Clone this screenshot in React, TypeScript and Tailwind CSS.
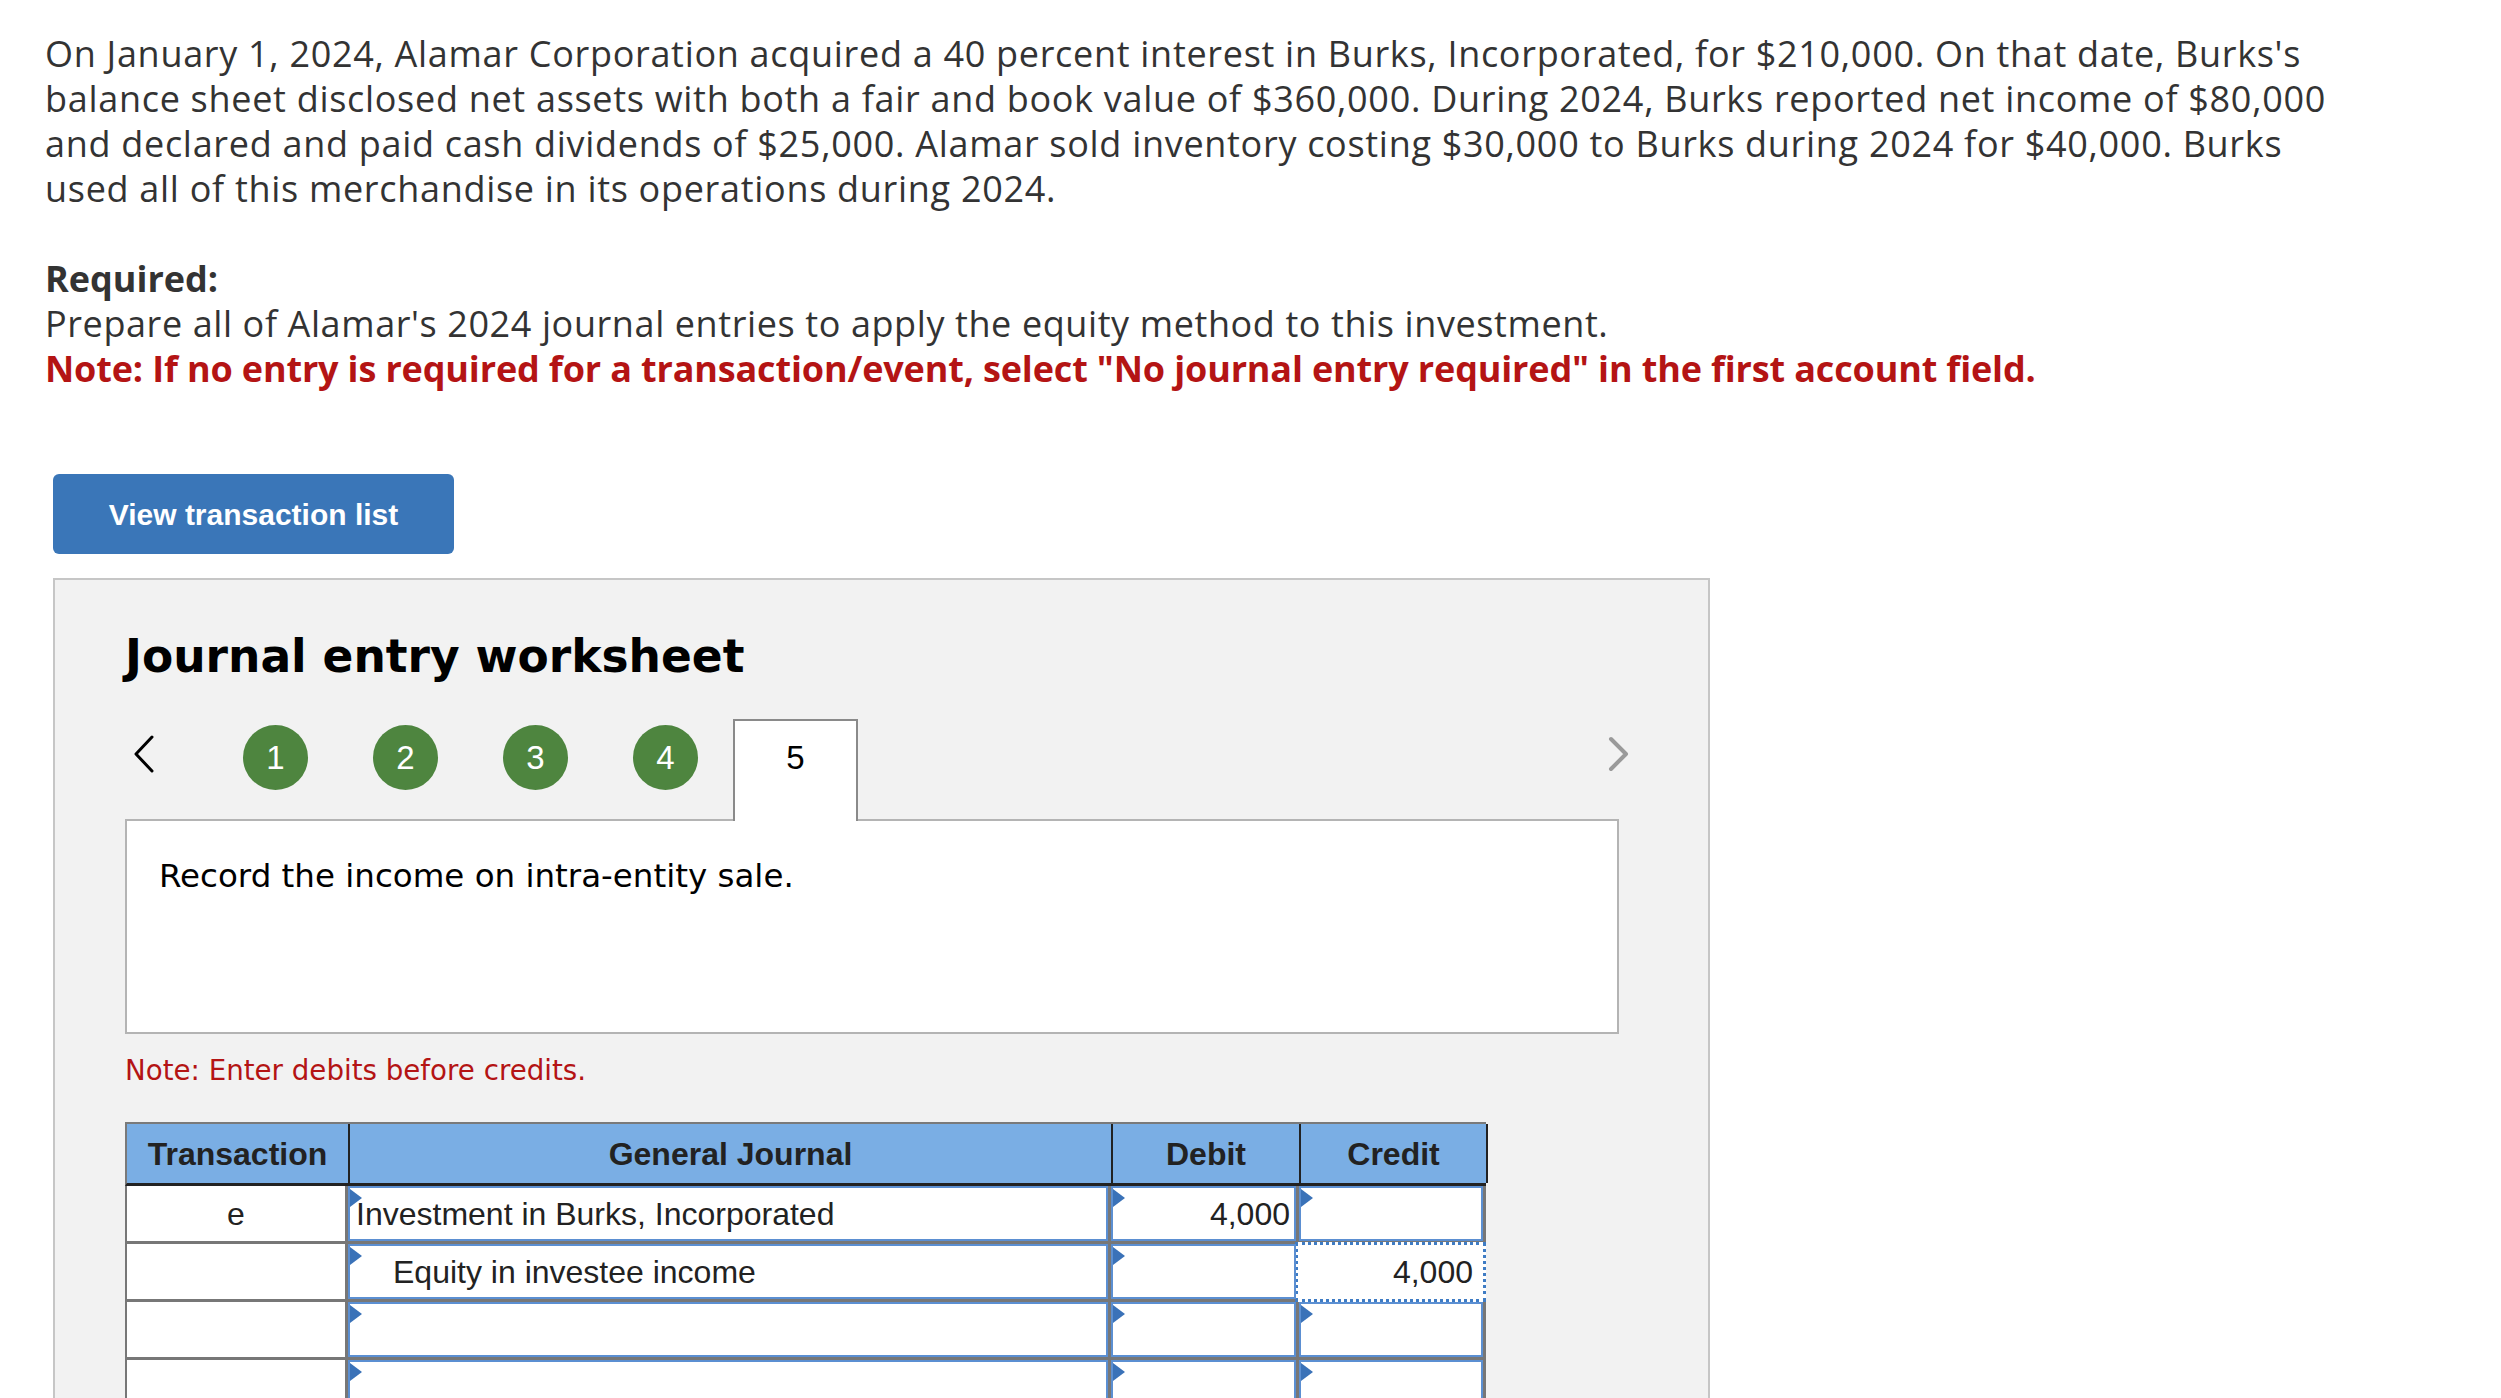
import React from "react";

const rows = [
  { tx: "e", account: "Investment in Burks, Incorporated", indent: false, debit: "4,000", credit: "", focus: false },
  { tx: "", account: "Equity in investee income", indent: true, debit: "", credit: "4,000", focus: true },
  { tx: "", account: "", indent: false, debit: "", credit: "", focus: false },
  { tx: "", account: "", indent: false, debit: "", credit: "", focus: false },
];

function Flag() {
  return (
    <span className="absolute left-0 top-[1px] w-0 h-0 border-y-[9px] border-y-transparent border-l-[12px] border-l-[#3a72b8]" />
  );
}

function InputCell({ value, align, indent }: { value: string; align: "left" | "right"; indent?: boolean }) {
  return (
    <div className="h-[58px] border-r-[3px] border-b-[3px] border-[#777]">
      <div
        className={`relative h-full border-2 border-[#5b8fd2] bg-white flex items-center ${
          align === "right" ? "justify-end pr-[4px]" : indent ? "pl-[43px]" : "pl-[6px]"
        }`}
      >
        <Flag />
        <span>{value}</span>
      </div>
    </div>
  );
}

export default function App() {
  return (
    <div className="min-h-screen bg-white pl-[45px] pt-[31px] pb-[40px] text-[#333]">
      {/* Problem text */}
      <p className="font-['Open_Sans',sans-serif] text-[36px] leading-[45px] tracking-[0.7px]">
        On January 1, 2024, Alamar Corporation acquired a 40 percent interest in Burks, Incorporated, for $210,000. On that date, Burks's
        <br />
        balance sheet disclosed net assets with both a fair and book value of $360,000. During 2024, Burks reported net income of $80,000
        <br />
        and declared and paid cash dividends of $25,000. Alamar sold inventory costing $30,000 to Burks during 2024 for $40,000. Burks
        <br />
        used all of this merchandise in its operations during 2024.
      </p>

      <div className="mt-[45px] font-['Open_Sans',sans-serif] text-[36px] leading-[45px] tracking-[0.6px]">
        <p className="font-bold tracking-normal">Required:</p>
        <p>Prepare all of Alamar's 2024 journal entries to apply the equity method to this investment.</p>
        <p className="font-bold tracking-[-0.15px] text-[#b41414]">
          Note: If no entry is required for a transaction/event, select "No journal entry required" in the first account field.
        </p>
      </div>

      <button className="mt-[83px] ml-[8px] w-[401px] h-[80px] rounded-[6px] bg-[#3a76b8] text-white font-bold text-[30px] font-['Liberation_Sans',Arial,sans-serif]">
        View transaction list
      </button>

      {/* Worksheet panel */}
      <div className="mt-[24px] ml-[8px] w-[1657px] border-2 border-[#c6c6c6] bg-[#f2f2f2] pl-[70px] pt-[53px] pb-[120px]">
        <h2 className="font-['DejaVu_Sans',Verdana,sans-serif] font-bold text-[45.5px] leading-[48px] text-black">
          Journal entry worksheet
        </h2>

        <div className="mt-[38px] flex items-start h-[100px] w-[1510px]">
          <svg className="ml-[7px] mt-[16px]" width="24" height="38" viewBox="0 0 24 38" fill="none">
            <path d="M20 2 L4 19 L20 36" stroke="#000" strokeWidth="3" strokeLinecap="round" strokeLinejoin="round" />
          </svg>
          {[1, 2, 3, 4].map((n, i) => (
            <div
              key={n}
              className={`${i === 0 ? "ml-[87px]" : "ml-[65px]"} mt-[6px] w-[65px] h-[65px] rounded-full bg-[#4e853f] text-white flex items-center justify-center text-[33px] font-['Liberation_Sans',Arial,sans-serif]`}
            >
              {n}
            </div>
          ))}
          <div className="relative z-10 ml-[35px] w-[125px] h-[102px] bg-white border-2 border-b-0 border-[#8a8a8a] flex justify-center pt-[18px] text-[33px] leading-[38px] text-black font-['Liberation_Sans',Arial,sans-serif]">
            5
          </div>
          <svg className="ml-auto mr-[6px] mt-[17px]" width="21" height="36" viewBox="0 0 21 36" fill="none">
            <path d="M3 3 L18 18 L3 33" stroke="#9a9a9a" strokeWidth="4" strokeLinecap="round" strokeLinejoin="round" />
          </svg>
        </div>

        <div className="w-[1494px] h-[215px] border-2 border-[#b4b4b4] bg-white pl-[32px] pt-[36px] font-['DejaVu_Sans',Verdana,sans-serif] text-[32.5px] leading-[38px] text-black">
          Record the income on intra-entity sale.
        </div>

        <p className="mt-[20px] font-['DejaVu_Sans',Verdana,sans-serif] text-[27.7px] leading-[34px] text-[#b41414]">
          Note: Enter debits before credits.
        </p>

        {/* Journal table */}
        <div className="mt-[34px] w-[1361px] font-['Liberation_Sans',Arial,sans-serif] text-[32px] text-[#222]">
          <div className="grid grid-cols-[223px_763px_188px_187px] h-[64px] border-t-2 border-l-2 border-[#7a7a7a] border-b-[3px] border-b-[#222] bg-[#7aaee4] font-bold">
            {["Transaction", "General Journal", "Debit", "Credit"].map((h) => (
              <div key={h} className="flex items-center justify-center border-r-2 border-[#222]">
                {h}
              </div>
            ))}
          </div>
          {rows.map((r, i) => (
            <div key={i} className="grid grid-cols-[223px_763px_188px_187px]">
              <div className="h-[58px] bg-white border-l-2 border-r-[3px] border-b-[3px] border-[#777] flex items-center justify-center">
                {r.tx}
              </div>
              <InputCell value={r.account} align="left" indent={r.indent} />
              <InputCell value={r.debit} align="right" />
              {r.focus ? (
                <div className="-ml-[4px] -mt-[2px] h-[60px] bg-white border-[3px] border-dotted border-[#3f7cc4] flex items-center justify-end pr-[10px]">
                  {r.credit}
                </div>
              ) : (
                <InputCell value={r.credit} align="right" />
              )}
            </div>
          ))}
        </div>
      </div>
    </div>
  );
}
